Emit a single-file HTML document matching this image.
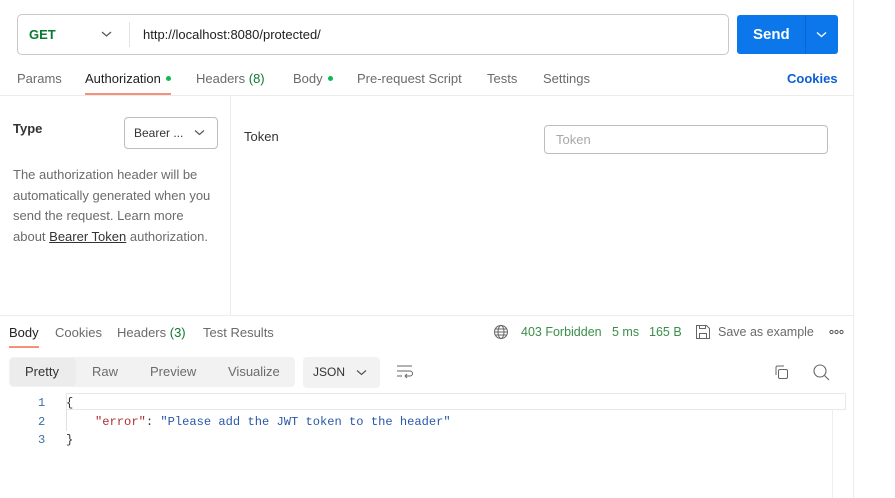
<!DOCTYPE html>
<html><head><meta charset="utf-8"><style>
*{box-sizing:border-box;margin:0;padding:0}
body{width:895px;height:498px;background:#fff;font-family:"Liberation Sans",sans-serif;font-size:13px;color:#212121;position:relative;overflow:hidden}
.a{position:absolute;white-space:nowrap}
.g{color:#6b6b6b}
.dot{display:inline-block;width:5px;height:5px;border-radius:50%;background:#0cbb52;margin-left:5px;vertical-align:middle;position:relative;top:-1px}
.mono{font-family:"Liberation Mono",monospace;font-size:12.1px}
</style></head><body>
<div class="a" style="left:853px;top:0;width:1px;height:498px;background:#ededed"></div>
<div class="a" style="left:17px;top:14px;width:712px;height:41px;border:1px solid #c8c8c8;border-radius:5px"></div>
<div class="a" style="left:29px;top:27px;color:#0b7a2f;font-weight:bold;font-size:13px">GET</div>
<svg class="a" style="left:101px;top:30px" width="11" height="8" viewBox="0 0 11 8"><path d="M1 2l4.5 4 4.5-4" fill="none" stroke="#555" stroke-width="1.2"/></svg>
<div class="a" style="left:129px;top:22px;width:1px;height:25px;background:#e3e3e3"></div>
<div class="a" style="left:143px;top:27px;font-size:13px">http://localhost:8080/protected/</div>
<div class="a" style="left:737px;top:15px;width:101px;height:39px;background:#0c77ea;border-radius:3px"></div>
<div class="a" style="left:805px;top:15px;width:1px;height:39px;background:#0a66cc"></div>
<div class="a" style="left:753px;top:26px;color:#fff;font-weight:bold;font-size:15px">Send</div>
<svg class="a" style="left:816px;top:31px" width="11" height="7" viewBox="0 0 11 7"><path d="M1 1.5l4.5 4 4.5-4" fill="none" stroke="#fff" stroke-width="1.3"/></svg>
<div class="a g" style="left:17px;top:71px">Params</div>
<div class="a" style="left:85px;top:71px">Authorization<span class="dot"></span></div>
<div class="a" style="left:85px;top:93px;width:86px;height:2px;background:#f6907a"></div>
<div class="a g" style="left:196px;top:71px">Headers <span style="color:#0b7a2f">(8)</span></div>
<div class="a g" style="left:293px;top:71px">Body<span class="dot"></span></div>
<div class="a g" style="left:357px;top:71px">Pre-request Script</div>
<div class="a g" style="left:487px;top:71px">Tests</div>
<div class="a g" style="left:543px;top:71px">Settings</div>
<div class="a" style="left:787px;top:71px;color:#0b5ed4;font-weight:bold;font-size:13px">Cookies</div>
<div class="a" style="left:0;top:95px;width:853px;height:1px;background:#ececec"></div>
<div class="a" style="left:230px;top:96px;width:1px;height:219px;background:#ececec"></div>
<div class="a" style="left:13px;top:121px;color:#333;font-weight:bold">Type</div>
<div class="a" style="left:124px;top:117px;width:94px;height:32px;border:1px solid #bdbdbd;border-radius:4px"></div>
<div class="a" style="left:134px;top:126px;font-size:12px;color:#333">Bearer ...</div>
<svg class="a" style="left:194px;top:129px" width="11" height="7" viewBox="0 0 11 7"><path d="M1 1.5l4.5 4 4.5-4" fill="none" stroke="#555" stroke-width="1.2"/></svg>
<div class="a g" style="left:13px;top:165px;line-height:20.5px;white-space:normal;width:205px">The authorization header will be automatically generated when you send the request. Learn more about <span style="color:#333;text-decoration:underline">Bearer Token</span> authorization.</div>
<div class="a" style="left:244px;top:129px;color:#333">Token</div>
<div class="a" style="left:544px;top:125px;width:284px;height:29px;border:1px solid #bdbdbd;border-radius:4px"></div>
<div class="a" style="left:556px;top:132px;color:#a8a8a8">Token</div>
<div class="a" style="left:0;top:315px;width:853px;height:1px;background:#ececec"></div>
<div class="a" style="left:9px;top:325px">Body</div>
<div class="a" style="left:9px;top:346px;width:30px;height:2px;background:#f6907a"></div>
<div class="a g" style="left:55px;top:325px">Cookies</div>
<div class="a g" style="left:117px;top:325px">Headers <span style="color:#0b7a2f">(3)</span></div>
<div class="a g" style="left:203px;top:325px">Test Results</div>
<svg class="a" style="left:493px;top:324px" width="16" height="16" viewBox="0 0 16 16" fill="none" stroke="#666" stroke-width="1"><circle cx="8" cy="8" r="6.5"/><ellipse cx="8" cy="8" rx="3" ry="6.5"/><path d="M1.5 8h13M2.5 5h11M2.5 11h11"/></svg>
<div class="a" style="left:521px;top:325px;color:#3a8f48;font-size:12.5px">403 Forbidden</div>
<div class="a" style="left:612px;top:325px;color:#3a8f48;font-size:12.5px">5 ms</div>
<div class="a" style="left:649px;top:325px;color:#3a8f48;font-size:12.5px">165 B</div>
<svg class="a" style="left:695px;top:324px" width="16" height="16" viewBox="0 0 16 16" fill="none" stroke="#666" stroke-width="1"><path d="M1.5 1.5h10l3 3v10h-13z"/><path d="M4.5 1.5v3h6v-3M4.5 14.5v-5h7v5"/></svg>
<div class="a g" style="left:718px;top:325px;font-size:12.5px">Save as example</div>
<svg class="a" style="left:829px;top:329px" width="15" height="6" viewBox="0 0 15 6" fill="none" stroke="#555" stroke-width="1"><circle cx="2.5" cy="3" r="1.6"/><circle cx="7.5" cy="3" r="1.6"/><circle cx="12.5" cy="3" r="1.6"/></svg>
<div class="a" style="left:9px;top:357px;width:286px;height:30px;background:#f2f2f2;border-radius:4px"></div>
<div class="a" style="left:10px;top:358px;width:66px;height:28px;background:#ececec;border-radius:4px"></div>
<div class="a" style="left:25px;top:364px;color:#333">Pretty</div>
<div class="a g" style="left:92px;top:364px">Raw</div>
<div class="a g" style="left:150px;top:364px">Preview</div>
<div class="a g" style="left:228px;top:364px">Visualize</div>
<div class="a" style="left:303px;top:357px;width:77px;height:31px;background:#f2f2f2;border-radius:4px"></div>
<div class="a" style="left:313px;top:365px;color:#333;font-size:12px">JSON</div>
<svg class="a" style="left:356px;top:369px" width="11" height="7" viewBox="0 0 11 7"><path d="M1 1.5l4.5 4 4.5-4" fill="none" stroke="#555" stroke-width="1.2"/></svg>
<svg class="a" style="left:396px;top:364px" width="17" height="15" viewBox="0 0 17 15" fill="none" stroke="#666" stroke-width="1"><path d="M1 2h15M1 7h13a2.5 2.5 0 010 5h-4M1 12h5M11 10l-2 2 2 2"/></svg>
<svg class="a" style="left:773px;top:364px" width="16" height="16" viewBox="0 0 16 16" fill="none" stroke="#666" stroke-width="1"><rect x="5.5" y="5.5" width="9" height="9" rx="1.5"/><path d="M3 11V3.5A1.5 1.5 0 014.5 2H11"/></svg>
<svg class="a" style="left:813px;top:364px" width="17" height="17" viewBox="0 0 17 17" fill="none" stroke="#666" stroke-width="1.1"><circle cx="7" cy="7" r="6"/><path d="M11.5 11.5l4.5 4.5"/></svg>
<div class="a" style="left:66px;top:393px;width:780px;height:17px;border:1px solid #e8e8e8"></div>
<div class="a" style="left:66px;top:410px;width:1px;height:21px;background:#e0e0e0"></div>
<div class="a" style="left:832px;top:410px;width:1px;height:88px;background:#eee"></div>
<div class="a mono" style="left:38px;top:394px;color:#3f6f9f;line-height:18.5px">1<br>2<br>3</div>
<div class="a mono" style="left:66px;top:394px;line-height:18.5px;color:#333">{<br>&nbsp;&nbsp;&nbsp;&nbsp;<span style="color:#b02f2f">"error"</span>: <span style="color:#2a58a8">"Please add the JWT token to the header"</span><br>}</div>
</body></html>
